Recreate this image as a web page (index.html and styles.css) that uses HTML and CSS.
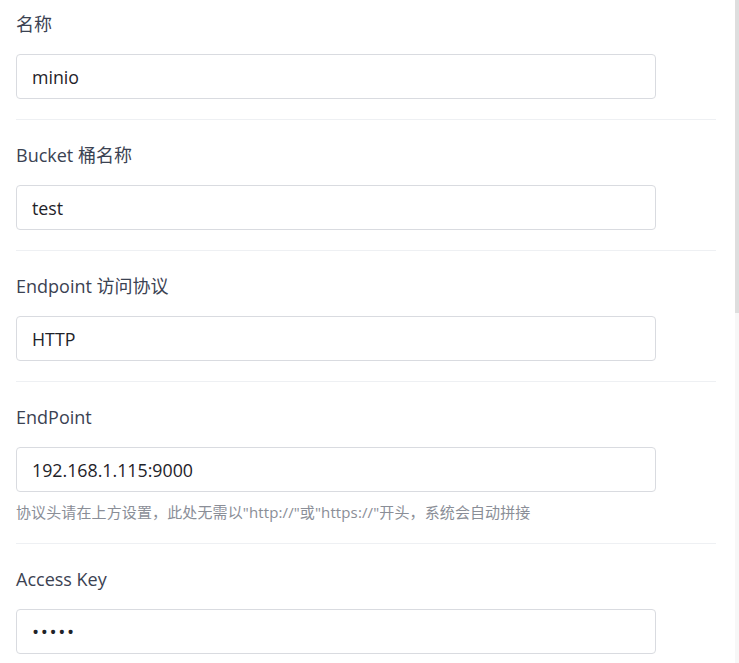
FILE: index.html
```html
<!DOCTYPE html>
<html lang="zh-CN">
<head>
<meta charset="utf-8">
<title>存储配置</title>
<link rel="stylesheet" href="styles.css">
</head>
<body>
<div class="shell">
  <div class="page">
    <form class="form">
      <div class="item">
        <div class="label">名称</div>
        <input class="input" type="text" value="minio">
      </div>
      <div class="item">
        <div class="label">Bucket 桶名称</div>
        <input class="input" type="text" value="test">
      </div>
      <div class="item">
        <div class="label">Endpoint 访问协议</div>
        <input class="input" type="text" value="HTTP">
      </div>
      <div class="item">
        <div class="label">EndPoint</div>
        <input class="input" type="text" value="192.168.1.115:9000">
        <div class="help">协议头请在上方设置，此处无需以"http://"或"https://"开头，系统会自动拼接</div>
      </div>
      <div class="item">
        <div class="label">Access Key</div>
        <input class="input input-secret" type="password" value="minio">
      </div>
    </form>
  </div>
  <div class="scrollbar"><div class="thumb"></div></div>
</div>
</body>
</html>
```
FILE: styles.css
```css
html, body {
  margin: 0;
  padding: 0;
  background: #ffffff;
}
body {
  font-family: "Open Sans", "Noto Sans CJK SC", sans-serif;
}
.shell {
  display: flex;
  height: 663px;
  overflow: hidden;
}
.page {
  flex: 1;
  padding-left: 16px;
  overflow: hidden;
}
.form {
  width: 700px;
  margin: 0;
}
.item {
  padding: 23px 0 20px;
  border-bottom: 1px solid #eef0f3;
}
.item:first-child {
  padding-top: 12px;
}
.label {
  font-size: 18px;
  line-height: 24px;
  color: #3b4252;
  margin-bottom: 18px;
}
.input {
  display: block;
  box-sizing: border-box;
  width: 640px;
  height: 45px;
  margin: 0;
  padding: 0 15px;
  border: 1px solid #d9dbe0;
  border-radius: 4px;
  background: #ffffff;
  font-family: "Open Sans", "Noto Sans CJK SC", sans-serif;
  font-size: 17.8px;
  color: #1f2329;
  outline: none;
}
.input-secret {
  letter-spacing: 1.6px;
  font-size: 19px;
}
.help {
  margin-top: 9px;
  font-size: 15px;
  line-height: 22px;
  letter-spacing: 0.12px;
  color: #8a8e97;
}
.scrollbar {
  width: 4px;
  background: #f7f7f7;
  display: flex;
  flex-direction: column;
}
.thumb {
  height: 313px;
  background: #dedede;
}
```
